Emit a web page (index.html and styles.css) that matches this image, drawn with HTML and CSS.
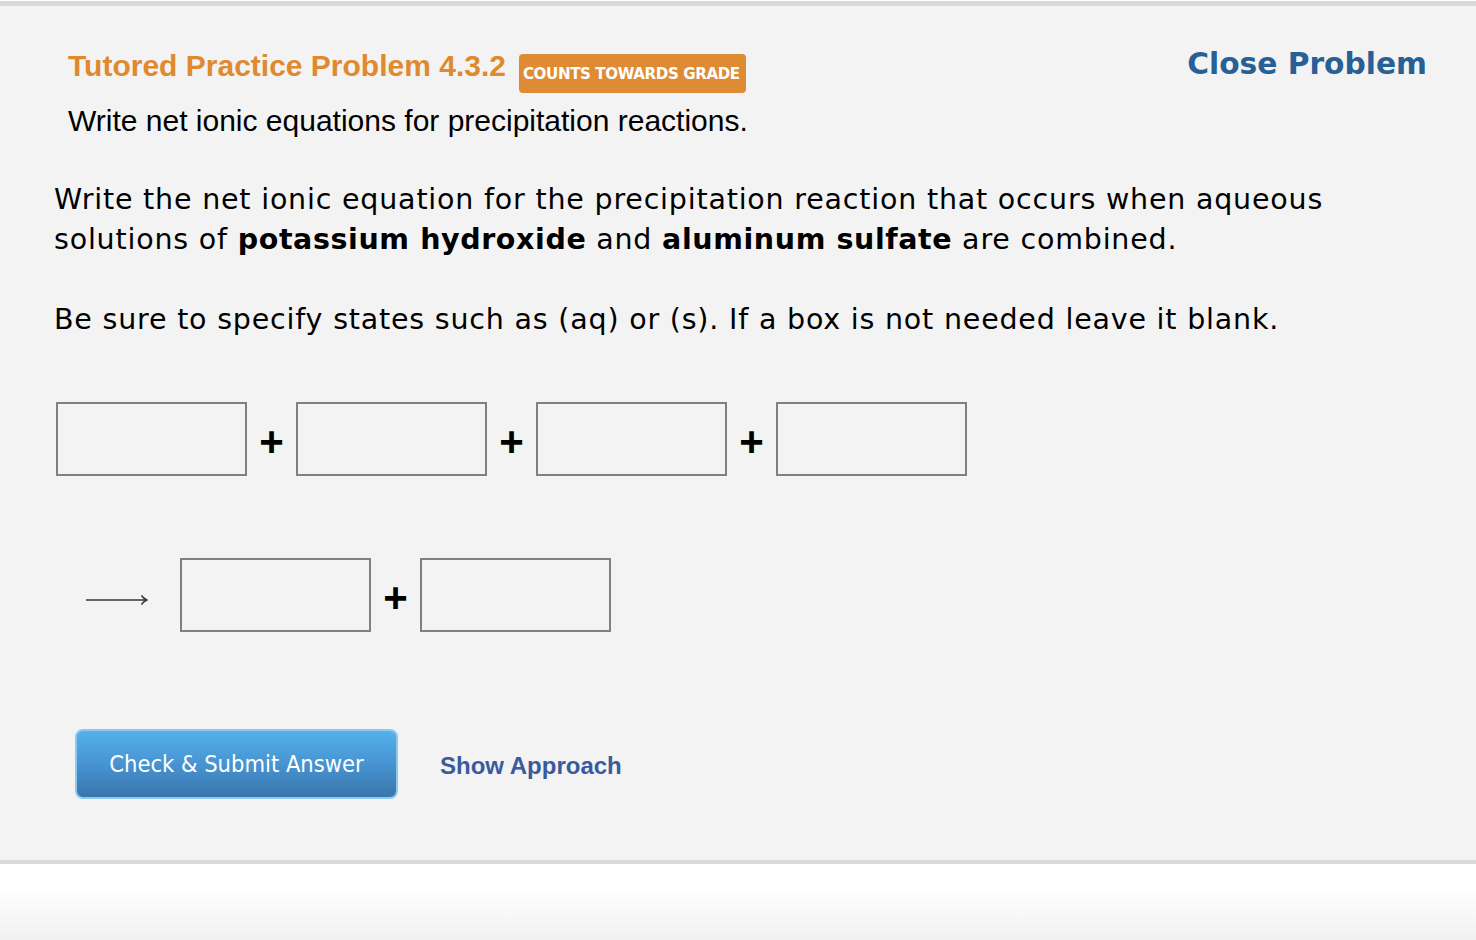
FILE: index.html
```html
<!DOCTYPE html>
<html lang="en">
<head>
<meta charset="utf-8">
<title>Tutored Practice Problem 4.3.2</title>
<link rel="stylesheet" href="styles.css">
</head>
<body>
<div class="frame">
  <div class="header">
    <div class="title-group">
      <h1 class="title">Tutored Practice Problem 4.3.2</h1>
      <span class="badge">COUNTS TOWARDS GRADE</span>
    </div>
    <a class="close-link" href="#">Close Problem</a>
  </div>
  <p class="subtitle">Write net ionic equations for precipitation reactions.</p>

  <p class="question">Write the net ionic equation for the precipitation reaction that occurs when aqueous solutions of <b>potassium hydroxide</b> and <b>aluminum sulfate</b> are combined.</p>
  <p class="question second">Be sure to specify states such as (aq) or (s). If a box is not needed leave it blank.</p>

  <div class="eq-row reactants">
    <input class="box" type="text" aria-label="reactant 1">
    <span class="plus">+</span>
    <input class="box" type="text" aria-label="reactant 2">
    <span class="plus">+</span>
    <input class="box" type="text" aria-label="reactant 3">
    <span class="plus">+</span>
    <input class="box" type="text" aria-label="reactant 4">
  </div>

  <div class="eq-row products">
    <svg class="arrow" width="62" height="14" viewBox="0 0 62 14" aria-hidden="true">
      <line x1="0" y1="7" x2="60" y2="7" stroke="#333" stroke-width="1.7"/>
      <path d="M55.5 2.5 Q57.5 5.5 60.8 7 Q57.5 8.5 55.5 11.5" fill="none" stroke="#333" stroke-width="1.4"/>
    </svg>
    <input class="box first-product" type="text" aria-label="product 1">
    <span class="plus">+</span>
    <input class="box" type="text" aria-label="product 2">
  </div>

  <div class="actions">
    <button class="submit-btn" type="button">Check &amp; Submit Answer</button>
    <a class="approach-link" href="#">Show Approach</a>
  </div>
</div>
<div class="footer"></div>
</body>
</html>
```

FILE: styles.css
```css
html, body {
  margin: 0;
  padding: 0;
}

body {
  background: #ffffff;
  padding-top: 1px;
  height: 939px;
  overflow: hidden;
}

.frame {
  background: #f3f3f3;
  border-top: 5px solid #d9d9d9;
  border-bottom: 4px solid #d9d9d9;
  height: 854px;
  box-sizing: content-box;
  padding-left: 54px;
  padding-right: 49px;
}

.header {
  display: flex;
  justify-content: space-between;
  align-items: flex-start;
  padding-top: 41px;
  padding-left: 14px;
}

.title-group {
  display: flex;
  align-items: flex-start;
}

.title {
  margin: 2px 0 0 0;
  font-family: "Liberation Sans", Arial, sans-serif;
  font-weight: bold;
  font-size: 30px;
  line-height: 34px;
  color: #e0892f;
}

.badge {
  margin-top: 7px;
  margin-left: 13px;
  height: 39px;
  box-sizing: border-box;
  display: inline-flex;
  align-items: center;
  padding: 0 6px 0 4px;
  background: #df8b33;
  border-radius: 4px;
  color: #ffffff;
  font-family: "DejaVu Sans", Verdana, sans-serif;
  font-weight: bold;
  font-size: 15.1px;
  letter-spacing: -0.4px;
}

.close-link {
  font-family: "DejaVu Sans", Verdana, sans-serif;
  font-weight: bold;
  font-size: 29.7px;
  line-height: 34px;
  color: #285f95;
  text-decoration: none;
}

.subtitle {
  margin: 11px 0 0 14px;
  font-family: "Liberation Sans", Arial, sans-serif;
  font-size: 30px;
  line-height: 34px;
  color: #000000;
}

.question {
  margin: 42px 0 0 0;
  font-family: "DejaVu Sans", Verdana, sans-serif;
  font-size: 28.5px;
  line-height: 40px;
  letter-spacing: 0.8px;
  color: #000000;
  max-width: 1320px;
}

.question b {
  letter-spacing: 0.6px;
}

.question.second {
  margin-top: 40px;
}

.eq-row {
  display: flex;
  align-items: center;
  margin-left: 2px;
}

.reactants {
  margin-top: 62px;
}

.products {
  margin-top: 82px;
}

.box {
  width: 191px;
  height: 74px;
  box-sizing: border-box;
  border: 2px solid #808080;
  background: transparent;
  margin: 0;
  padding: 0 8px;
  font-size: 20px;
  outline: none;
}

.plus {
  width: 49px;
  text-align: center;
  font-family: "Liberation Sans", Arial, sans-serif;
  font-weight: bold;
  font-size: 42px;
  line-height: 42px;
  margin-top: 5px;
  color: #000000;
}

.arrow {
  margin-left: 30px;
  margin-top: 10px;
  flex: none;
}

.first-product {
  margin-left: 32px;
}

.actions {
  display: flex;
  align-items: center;
  margin-top: 97px;
  margin-left: 21px;
}

.submit-btn {
  width: 323px;
  height: 70px;
  box-sizing: border-box;
  border: 2px solid #8ccbf0;
  border-radius: 8px;
  background: linear-gradient(to bottom, #55b1eb 0%, #4591cf 55%, #3a75ab 100%);
  color: #ffffff;
  font-family: "DejaVu Sans Condensed", "DejaVu Sans", sans-serif;
  font-stretch: condensed;
  font-size: 23.5px;
  padding: 0;
  margin: 0;
  cursor: pointer;
}

.approach-link {
  margin-left: 42px;
  margin-top: 4px;
  font-family: "Liberation Sans", Arial, sans-serif;
  font-weight: bold;
  font-size: 24px;
  color: #3b5a9d;
  text-decoration: none;
}

.footer {
  height: 76px;
  background: linear-gradient(to bottom, #ffffff 0%, #ffffff 30%, #f1f1f1 100%);
}
```
